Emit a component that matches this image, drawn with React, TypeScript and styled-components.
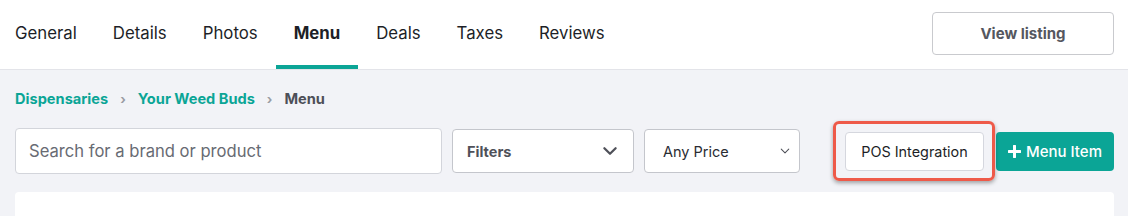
import React from "react";
import styled, { createGlobalStyle } from "styled-components";

const teal = "#0ba596";

const GlobalStyle = createGlobalStyle`
  body {
    margin: 0;
    background: #f2f3f7;
    font-family: Inter, "Noto Sans", sans-serif;
    color: #1d1f27;
  }
`;

const tabs = ["General", "Details", "Photos", "Menu", "Deals", "Taxes", "Reviews"];

const Header = styled.header`
  box-sizing: border-box;
  height: 70px;
  background: #ffffff;
  border-bottom: 1px solid #e3e4e9;
  display: flex;
  justify-content: space-between;
  padding: 0 14px 0 0;
`;

const TabList = styled.nav`
  display: flex;
  height: 69px;
`;

const Tab = styled.a<{ $active?: boolean }>`
  box-sizing: border-box;
  display: flex;
  align-items: center;
  height: 100%;
  padding: 0 18px;
  font-size: 16.8px;
  font-weight: ${({ $active }) => ($active ? 700 : 400)};
  color: #1d1f27;
  border-bottom: 4px solid ${({ $active }) => ($active ? teal : "transparent")};
  cursor: pointer;
  &:first-child {
    padding-left: 15px;
  }
`;

const OutlineButton = styled.button`
  box-sizing: border-box;
  margin-top: 12px;
  width: 182px;
  height: 43px;
  background: #ffffff;
  border: 1px solid #c9cace;
  border-radius: 4px;
  font-family: inherit;
  font-size: 15px;
  font-weight: 700;
  color: #55575f;
  cursor: pointer;
`;

const Main = styled.main`
  padding: 0 14px 0 15px;
`;

const Breadcrumb = styled.div`
  display: flex;
  align-items: center;
  gap: 12px;
  padding-top: 19px;
  height: 20px;
  font-size: 14.6px;
  font-weight: 700;
`;

const Crumb = styled.a<{ $current?: boolean }>`
  color: ${({ $current }) => ($current ? "#4d4f57" : teal)};
  cursor: pointer;
`;

const Sep = styled.span`
  color: #9a9ca3;
  font-size: 13px;
  font-weight: 700;
`;

const Toolbar = styled.div`
  display: flex;
  align-items: center;
  margin-top: 19px;
  height: 46px;
`;

const Search = styled.input`
  box-sizing: border-box;
  width: 427px;
  height: 46px;
  padding: 0 13px;
  background: #ffffff;
  border: 1px solid #d3d5db;
  border-radius: 4px;
  font-family: inherit;
  font-size: 16.6px;
  color: #1d1f27;
  &::placeholder {
    color: #686b73;
  }
`;

const Select = styled.div<{ $width: number; $bold?: boolean }>`
  box-sizing: border-box;
  display: flex;
  align-items: center;
  justify-content: space-between;
  width: ${({ $width }) => $width}px;
  height: 44px;
  margin-left: 10px;
  padding: 0 ${({ $bold }) => ($bold ? 14 : 8)}px 0 ${({ $bold }) => ($bold ? 14 : 18)}px;
  background: #ffffff;
  border: 1px solid #c4c6cc;
  border-radius: 4px;
  font-size: ${({ $bold }) => ($bold ? 14.5 : 14.5)}px;
  font-weight: ${({ $bold }) => ($bold ? 700 : 400)};
  color: ${({ $bold }) => ($bold ? "#4f5159" : "#2a2c33")};
  cursor: pointer;
`;

const Spacer = styled.div`
  flex: 1;
`;

const Highlight = styled.div`
  position: relative;
  margin-right: 12px;
  &::after {
    content: "";
    position: absolute;
    top: -11px;
    bottom: -10px;
    left: -12px;
    right: -11px;
    border: 3px solid #ee5a49;
    border-radius: 6px;
    box-shadow: 0 2px 4px rgba(0, 0, 0, 0.35);
    pointer-events: none;
  }
`;

const PosButton = styled.button`
  box-sizing: border-box;
  display: block;
  width: 139px;
  height: 39px;
  background: #ffffff;
  border: 1px solid #d5d7de;
  border-radius: 4px;
  font-family: inherit;
  font-size: 14.4px;
  color: #1d1f27;
  cursor: pointer;
`;

const AddButton = styled.button`
  box-sizing: border-box;
  display: flex;
  align-items: center;
  justify-content: center;
  gap: 5px;
  width: 118px;
  height: 39px;
  background: ${teal};
  border: none;
  border-radius: 4px;
  font-family: inherit;
  font-size: 15px;
  font-weight: 500;
  color: #ffffff;
  cursor: pointer;
`;

const Card = styled.div`
  margin-top: 18px;
  height: 24px;
  background: #ffffff;
  border-radius: 4px 4px 0 0;
`;

const Chevron = ({ size, stroke }: { size: number; stroke: number }) => (
  <svg width={size} height={size} viewBox="0 0 16 16" fill="none">
    <path d="M3 5.5l5 5 5-5" stroke="#4f5159" strokeWidth={stroke} strokeLinecap="round" strokeLinejoin="round" />
  </svg>
);

const Plus = () => (
  <svg width="13" height="13" viewBox="0 0 13 13">
    <path d="M6.5 1v11M1 6.5h11" stroke="#ffffff" strokeWidth="3" strokeLinecap="round" />
  </svg>
);

export default function App() {
  return (
    <>
      <GlobalStyle />
      <Header>
        <TabList>
          {tabs.map((t) => (
            <Tab key={t} $active={t === "Menu"}>
              {t}
            </Tab>
          ))}
        </TabList>
        <OutlineButton>View listing</OutlineButton>
      </Header>
      <Main>
        <Breadcrumb>
          <Crumb>Dispensaries</Crumb>
          <Sep>›</Sep>
          <Crumb>Your Weed Buds</Crumb>
          <Sep>›</Sep>
          <Crumb $current>Menu</Crumb>
        </Breadcrumb>
        <Toolbar>
          <Search placeholder="Search for a brand or product" />
          <Select $width={182} $bold>
            Filters
            <Chevron size={18} stroke={2} />
          </Select>
          <Select $width={156}>
            Any Price
            <Chevron size={12} stroke={1.4} />
          </Select>
          <Spacer />
          <Highlight>
            <PosButton>POS Integration</PosButton>
          </Highlight>
          <AddButton>
            <Plus />
            Menu Item
          </AddButton>
        </Toolbar>
        <Card />
      </Main>
    </>
  );
}
